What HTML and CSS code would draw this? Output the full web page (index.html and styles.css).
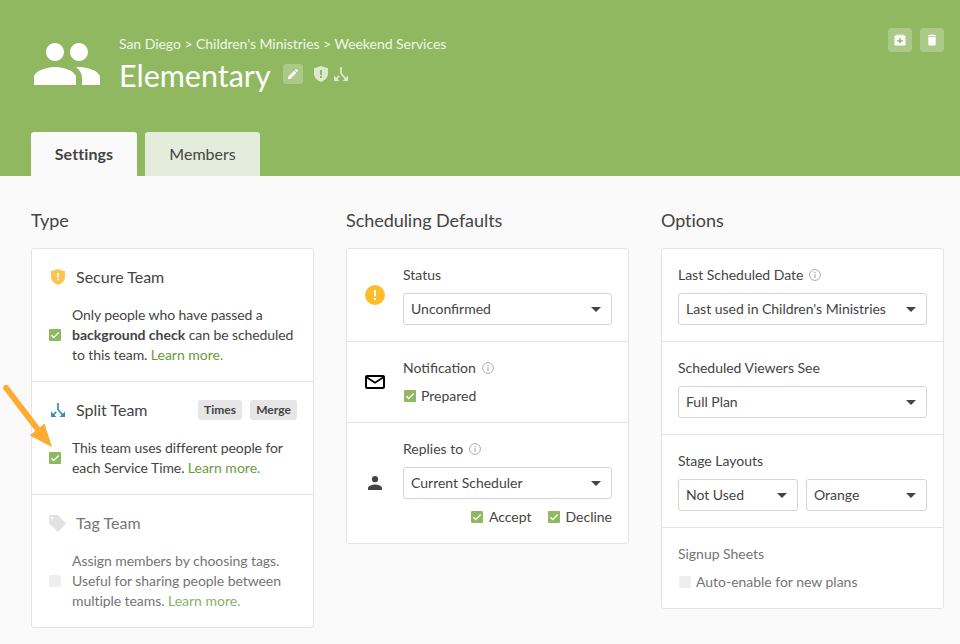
FILE: index.html
```
<!DOCTYPE html>
<html lang="en">
<head>
<meta charset="utf-8">
<title>Elementary</title>
<link rel="stylesheet" href="styles.css">
</head>
<body>
<svg class="sprite" aria-hidden="true">
  <symbol id="shield" viewBox="0 0 14 16"><path d="M7 0Q10.500 1.600 14 2v5.600c0 4-3 7-7 8.400C3 14.600 0 11.600 0 7.600V2Q3.500 1.600 7 0z"/></symbol>
  <symbol id="split" viewBox="0 0 14 14"><path d="M7 0v6.500L11.800 12M5.200 8.800L2.200 12" fill="none" stroke="currentColor" stroke-width="1.700"/><path d="M0 8.500L5.500 14H0zM14 8.500V14H8.500z"/></symbol>
  <symbol id="check" viewBox="0 0 12 12"><path d="M2.400 6.200l2.300 2.300 5-5" fill="none" stroke="#fff" stroke-width="1.300"/></symbol>
  <symbol id="info" viewBox="0 0 12 12"><circle cx="6" cy="6" r="5.400" fill="none" stroke="currentColor" stroke-width="1"/><path d="M5.400 5.200h1.200V9H5.400zM5.400 3h1.200v1.200H5.400z"/></symbol>
</svg>
<header class="header">
  <div class="masthead">
    <svg class="people" viewBox="0 0 24 24"><path d="M16 11c1.660 0 2.990-1.340 2.990-3S17.660 5 16 5s-3 1.340-3 3 1.340 3 3 3zm-8 0c1.660 0 2.990-1.340 2.990-3S9.660 5 8 5 5 6.340 5 8s1.340 3 3 3zm0 2c-2.330 0-7 1.170-7 3.500V19h14v-2.500c0-2.330-4.670-3.500-7-3.500zm8 0c-.29 0-.62.02-.97.05 1.160.84 1.970 1.970 1.970 3.450V19h6v-2.500c0-2.330-4.670-3.500-7-3.500z"/></svg>
    <div class="identity">
      <div class="crumbs">San Diego &gt; Children's Ministries &gt; Weekend Services</div>
      <div class="title-row">
        <h1>Elementary</h1>
        <button class="edit" aria-label="Edit"><svg viewBox="0 0 12 12"><path d="M1 8.900V11h2.100l6.200-6.200-2.100-2.100zM10.800 3.300c.3-.3.300-.6 0-.9L9.600 1.200c-.3-.3-.6-.3-.9 0l-.9.900 2.100 2.100z"/></svg></button>
        <span class="badge-shield"><svg viewBox="0 0 14 16"><use href="#shield"/><path class="mark" d="M6 4h2v5H6zM6 10h2v2H6z"/></svg></span>
        <svg class="badge-split"><use href="#split"/></svg>
      </div>
    </div>
    <div class="actions">
      <button aria-label="Archive"><svg viewBox="0 0 12 12"><path opacity=".7" d="M2 .5h8l1 1.500H1z"/><path d="M.5 2h11v9.500H.5z"/><path class="plus" d="M5.200 4.200h1.600v2h2.400v1.200H6.800v1.900H5.200V7.400H2.800V6.200h2.400z"/></svg></button>
      <button aria-label="Delete"><svg viewBox="0 0 12 12"><path d="M2 1h2.500l.5-.5h2l.5.500H10v1H2zM2.300 2.700h7.400v7.800a1 1 0 0 1-1 1H3.300a1 1 0 0 1-1-1z"/></svg></button>
    </div>
  </div>
  <nav class="tabs">
    <a class="tab tab-active">Settings</a>
    <a class="tab">Members</a>
  </nav>
</header>
<main class="columns">
  <section>
    <h2>Type</h2>
    <div class="card">
      <div class="team">
        <div class="team-head"><svg class="team-icon secure" viewBox="0 0 14 16"><use href="#shield"/><path fill="#fff" d="M6.200 4h1.700v4.500H6.200zM6.200 9.600h1.700v1.700H6.200z"/></svg><h3>Secure Team</h3></div>
        <div class="team-body"><span class="box"><svg><use href="#check"/></svg></span><p>Only people who have passed a <b>background check</b> can be scheduled to this team. <a>Learn more.</a></p></div>
      </div>
      <div class="team">
        <div class="team-head"><svg class="team-icon splitter"><use href="#split"/></svg><h3>Split Team</h3><div class="chips"><span class="chip times">Times</span><span class="chip">Merge</span></div></div>
        <div class="team-body"><span class="box"><svg><use href="#check"/></svg></span><p>This team uses different people for each Service Time. <a>Learn more.</a></p></div>
        <svg class="pointer" viewBox="0 0 56 70"><path d="M6.200 7l32 42" stroke="#ffaa33" stroke-width="6" stroke-linecap="round"/><path d="M29.800 54.500L44.500 42.500l7.500 23.500z" fill="#ffaa33"/></svg>
      </div>
      <div class="team muted">
        <div class="team-head"><svg class="team-icon tag" viewBox="0 0 17 17"><path fill-rule="evenodd" d="M1.700 0H8l1.200.5 7.200 7.200q.9.900 0 1.800l-6.600 6.600q-.9.900-1.800 0L.5 8.900 0 7.700V1.700Q0 0 1.700 0zM3 1.700a1.300 1.300 0 1 0 .01 0z"/></svg><h3>Tag Team</h3></div>
        <div class="team-body"><span class="box empty"></span><p>Assign members by choosing tags. Useful for sharing people between multiple teams. <a>Learn more.</a></p></div>
      </div>
    </div>
  </section>
  <section>
    <h2>Scheduling Defaults</h2>
    <div class="card">
      <div class="setting">
        <div class="setting-icon"><svg width="20" height="20" viewBox="0 0 20 20"><circle cx="10" cy="10" r="10" fill="#fdbe2c"/><path fill="#fff" d="M9 5h2v6.200H9zM9 13h2v2H9z"/></svg></div>
        <div class="field"><div class="label">Status</div><div class="select">Unconfirmed</div></div>
      </div>
      <div class="setting">
        <div class="setting-icon"><svg width="20" height="14" viewBox="0 0 20 14"><rect x="1" y="1" width="18" height="12" rx="1" fill="none" stroke="#000" stroke-width="2"/><path d="M2 2.600l8 5.200 8-5.200" fill="none" stroke="#000" stroke-width="1.800"/></svg></div>
        <div class="field"><div class="label">Notification <svg class="info"><use href="#info"/></svg></div><div class="option"><span class="box"><svg><use href="#check"/></svg></span>Prepared</div></div>
      </div>
      <div class="setting">
        <div class="setting-icon"><svg width="14" height="14" viewBox="0 0 14 14"><circle cx="7" cy="3.200" r="3.100" fill="#444"/><path fill="#444" d="M0 14v-2c0-2.400 4.500-3.600 7-3.600s7 1.200 7 3.600v2z"/></svg></div>
        <div class="field"><div class="label">Replies to <svg class="info"><use href="#info"/></svg></div><div class="select">Current Scheduler</div>
          <div class="options"><div class="option"><span class="box"><svg><use href="#check"/></svg></span>Accept</div><div class="option"><span class="box"><svg><use href="#check"/></svg></span>Decline</div></div></div>
      </div>
    </div>
  </section>
  <section>
    <h2>Options</h2>
    <div class="card">
      <div class="setting plain"><div class="field"><div class="label">Last Scheduled Date <svg class="info"><use href="#info"/></svg></div><div class="select">Last used in Children's Ministries</div></div></div>
      <div class="setting plain"><div class="field"><div class="label">Scheduled Viewers See</div><div class="select">Full Plan</div></div></div>
      <div class="setting plain"><div class="field"><div class="label">Stage Layouts</div><div class="pair"><div class="select">Not Used</div><div class="select">Orange</div></div></div></div>
      <div class="setting plain muted"><div class="field"><div class="label">Signup Sheets</div><div class="option"><span class="box empty"></span>Auto-enable for new plans</div></div></div>
    </div>
  </section>
</main>
</body>
</html>
```
FILE: styles.css
```
* { box-sizing: border-box; }
body { margin: 0; background: #fafafa; color: #444; font: 14px/20px Lato, sans-serif; height: 644px; overflow: hidden; }
h1, h2, h3, p { margin: 0; font-weight: 400; }
svg { display: block; fill: currentColor; flex: none; }
button { border: 0; padding: 0; color: #fff; display: flex; align-items: center; justify-content: center; background: #abc987; border-radius: 3px; }
.sprite { position: absolute; width: 0; height: 0; }

.header { height: 176px; background: #8fb860; padding: 28px 16px 0 31px; display: flex; flex-direction: column; justify-content: space-between; }
.masthead { display: flex; align-items: flex-start; color: #fff; }
.people { width: 72px; height: 72px; }
.identity { margin: 6px 0 0 16px; }
.crumbs { color: #f0f6e9; letter-spacing: -0.04px; }
.title-row { display: flex; align-items: center; height: 40px; }
h1 { font-size: 30.500px; line-height: 40px; padding-top: 2px; }
.edit { width: 20px; height: 20px; margin: 0 11px 0 12px; }
.edit svg { width: 12px; height: 12px; }
.badge-shield { color: #dbe9cd; }
.badge-shield svg { width: 14px; height: 16px; }
.mark { fill: #8fb860; }
.badge-split { width: 14px; height: 14px; margin-left: 6px; color: #dbe9cd; }
.actions { display: flex; gap: 8px; margin-left: auto; }
.actions button { width: 24px; height: 24px; }
.actions svg { width: 12px; height: 12px; }
.plus { fill: #8fb860; }

.tabs { display: flex; gap: 8px; }
.tab { height: 44px; width: 115px; line-height: 44px; font-size: 16px; text-align: center; background: #e4ecdb; border-radius: 3px 3px 0 0; }
.tab-active { width: 106px; background: #fafafa; font-weight: 700; letter-spacing: 0.1px; }

.columns { display: grid; grid-template-columns: repeat(3, 283px); gap: 32px; padding: 32px 16px 0 31px; align-items: start; }
h2 { font-size: 18px; line-height: 24px; margin-bottom: 16px; letter-spacing: -0.05px; }
.card { background: #fff; border: 1px solid #e4e4e4; border-radius: 3px; }
.card > * + * { border-top: 1px solid #e4e4e4; }

.team { padding: 16px 16px 16px 17px; position: relative; }
.team-head { display: flex; align-items: center; height: 24px; margin-bottom: 16px; }
.team-icon { width: 14px; height: 16px; margin: 0 11px 0 2px; }
.secure { color: #fdc54f; }
.splitter { color: #3d8cb8; height: 14px; }
.tag { color: #e2e2e2; width: 17px; height: 17px; margin: 0 10px 0 0; }
h3 { font-size: 16px; }
.chips { display: flex; gap: 8px; margin-left: auto; }
.chip { width: 47px; height: 20px; line-height: 20px; font-size: 12px; font-weight: 700; text-align: center; background: #e6e6e6; border-radius: 3px; }
.times { width: 44px; }
.team-body { display: flex; align-items: center; gap: 11px; }
.team-body p { flex: 1; letter-spacing: -0.09px; }
.team-body b { letter-spacing: 0; }
.team-body a { color: #6b9a3c; letter-spacing: 0; }
.box { width: 12px; height: 12px; border-radius: 1px; background: #8fb860; flex: none; }
.box svg { width: 12px; height: 12px; }
.empty { background: #eee; border-radius: 2px; }
.muted { color: #757575; }
.team.muted p { letter-spacing: -0.06px; }
.muted .team-body a { color: #8bb266; }
.pointer { position: absolute; left: -32px; top: -1px; width: 56px; height: 70px; }

.setting { display: flex; align-items: center; padding: 16px 16px 16px 0; }
.plain { padding-left: 16px; letter-spacing: -0.02px; }
.setting-icon { width: 56px; display: flex; justify-content: center; }
.field { flex: 1; display: grid; gap: 8px; }
.label { display: flex; align-items: center; gap: 6px; }
.info { width: 12px; height: 12px; color: #aaa; }
.select { height: 32px; border: 1px solid #d4d4d4; border-radius: 3px; background: #fff; padding: 0 10px 0 7px; display: flex; align-items: center; justify-content: space-between; white-space: nowrap; }
.select::after { content: ""; border: 5.500px solid transparent; border-top: 5px solid #444; border-bottom: 0; }
.pair { display: grid; grid-template-columns: 120px 1fr; gap: 8px; }
.option { display: flex; align-items: center; gap: 5px; padding-left: 1px; }
.options { display: flex; justify-content: flex-end; gap: 16px; }
.options .option { gap: 6px; padding-left: 0; }
```
